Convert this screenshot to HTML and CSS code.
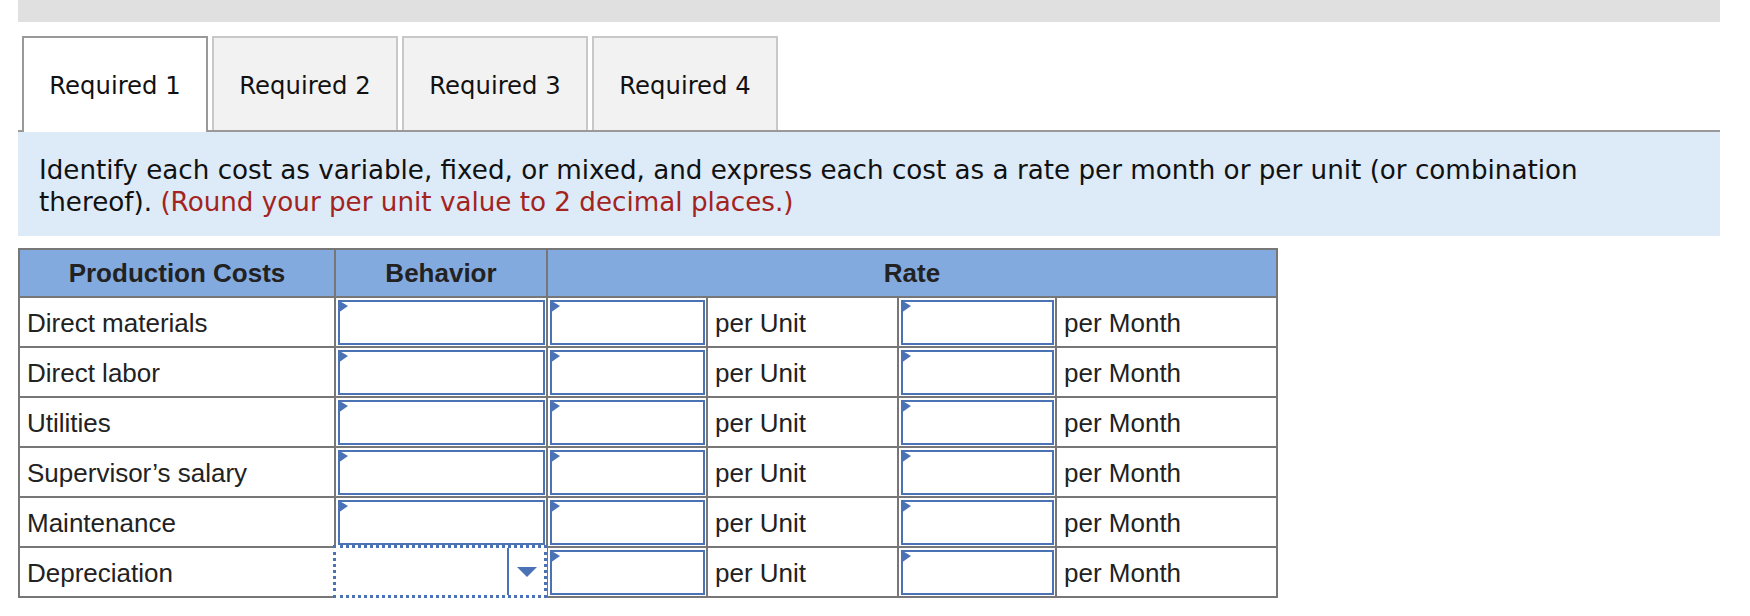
FILE: index.html
```html
<!DOCTYPE html>
<html lang="en">
<head>
<meta charset="utf-8">
<title>Required 1</title>
<link rel="stylesheet" href="styles.css">
</head>
<body>
<div class="page">
  <div class="topbar"></div>
  <div class="tabs">
    <div class="tab active">Required 1</div>
    <div class="tab">Required 2</div>
    <div class="tab">Required 3</div>
    <div class="tab">Required 4</div>
  </div>
  <div class="instructions">Identify each cost as variable, fixed, or mixed, and express each cost as a rate per month or per unit (or combination thereof). <span class="note">(Round your per unit value to 2 decimal places.)</span></div>
  <table class="costs">
    <colgroup>
      <col class="c-label"><col class="c-behavior"><col class="c-in1"><col class="c-unit"><col class="c-in2"><col class="c-month">
    </colgroup>
    <thead>
      <tr><th>Production Costs</th><th>Behavior</th><th colspan="4">Rate</th></tr>
    </thead>
    <tbody>
      <tr>
        <td class="label">Direct materials</td>
        <td class="input-cell"><div class="field"></div></td>
        <td class="input-cell"><div class="field"></div></td>
        <td class="unit">per Unit</td>
        <td class="input-cell"><div class="field"></div></td>
        <td class="unit">per Month</td>
      </tr>
      <tr>
        <td class="label">Direct labor</td>
        <td class="input-cell"><div class="field"></div></td>
        <td class="input-cell"><div class="field"></div></td>
        <td class="unit">per Unit</td>
        <td class="input-cell"><div class="field"></div></td>
        <td class="unit">per Month</td>
      </tr>
      <tr>
        <td class="label">Utilities</td>
        <td class="input-cell"><div class="field"></div></td>
        <td class="input-cell"><div class="field"></div></td>
        <td class="unit">per Unit</td>
        <td class="input-cell"><div class="field"></div></td>
        <td class="unit">per Month</td>
      </tr>
      <tr>
        <td class="label">Supervisor’s salary</td>
        <td class="input-cell"><div class="field"></div></td>
        <td class="input-cell"><div class="field"></div></td>
        <td class="unit">per Unit</td>
        <td class="input-cell"><div class="field"></div></td>
        <td class="unit">per Month</td>
      </tr>
      <tr>
        <td class="label">Maintenance</td>
        <td class="input-cell"><div class="field"></div></td>
        <td class="input-cell"><div class="field"></div></td>
        <td class="unit">per Unit</td>
        <td class="input-cell"><div class="field"></div></td>
        <td class="unit">per Month</td>
      </tr>
      <tr>
        <td class="label">Depreciation</td>
        <td class="select-cell">
          <div class="select">
            <div class="select-arrow">
              <svg width="20" height="10" viewBox="0 0 20 10"><path d="M0 0H20L10 10Z" fill="#4a72b5"/></svg>
            </div>
          </div>
        </td>
        <td class="input-cell"><div class="field"></div></td>
        <td class="unit">per Unit</td>
        <td class="input-cell"><div class="field"></div></td>
        <td class="unit">per Month</td>
      </tr>
    </tbody>
  </table>
</div>
</body>
</html>
```
FILE: styles.css
```css
body {
  margin: 0;
  background: #fff;
}

.page {
  margin-left: 18px;
  width: 1702px;
}

.topbar {
  height: 22px;
  background: #e0e0e0;
}

.tabs {
  display: flex;
  align-items: flex-start;
  gap: 4px;
  padding-left: 4px;
  margin-top: 14px;
  height: 94px;
  border-bottom: 2px solid #999;
}

.tab {
  box-sizing: border-box;
  width: 186px;
  height: 94px;
  padding-top: 2px;
  border: 2px solid #c8c8c8;
  border-bottom: none;
  background: #f2f2f2;
  display: flex;
  align-items: center;
  justify-content: center;
  font-family: "DejaVu Sans", Verdana, sans-serif;
  font-size: 24.3px;
  color: #111;
}

.tab.active {
  height: 96px;
  padding-bottom: 2px;
  background: #fff;
  border-color: #999;
}

.instructions {
  background: #ddeaf7;
  padding: 22px 100px 18px 21px;
  font-family: "DejaVu Sans", Verdana, sans-serif;
  font-size: 26.2px;
  line-height: 32px;
  color: #111;
}

.note {
  color: #a3231f;
}

.costs {
  margin-top: 12px;
  border-collapse: collapse;
  table-layout: fixed;
  width: 1258px;
  font-family: "Liberation Sans", Arial, sans-serif;
  font-size: 26px;
  color: #222;
}

.c-label { width: 316px; }
.c-behavior { width: 212px; }
.c-in1 { width: 160px; }
.c-unit { width: 191px; }
.c-in2 { width: 158px; }
.c-month { width: 221px; }

.costs th,
.costs td {
  border: 2px solid #777;
  padding: 0;
}

.costs thead tr {
  height: 48px;
}

.costs tbody tr {
  height: 50px;
}

.costs th {
  background: #82aade;
  font-weight: bold;
  text-align: center;
}

.costs td.label {
  padding-left: 7px;
  padding-top: 2px;
}

.costs td.unit {
  padding-left: 7px;
  padding-top: 2px;
}

.costs td.input-cell {
  padding: 2px 1px 1px 2px;
}

.field {
  position: relative;
  box-sizing: border-box;
  height: 45px;
  border: 2px solid #4a72b5;
  background: #fff;
}

.field::before {
  content: "";
  position: absolute;
  left: -2px;
  top: -2px;
  border-left: 10px solid #4a72b5;
  border-top: 6px solid transparent;
  border-bottom: 7px solid transparent;
}

.costs td.select-cell {
  padding: 0;
}

.select {
  position: relative;
  box-sizing: border-box;
  height: 53px;
  margin: -3px -1px -2px -3px;
  border: 3px dotted #4a72b5;
  background: #fff;
  display: flex;
  justify-content: flex-end;
}

.select-arrow {
  width: 35px;
  border-left: 2px solid #4a72b5;
  display: flex;
  align-items: center;
  justify-content: center;
}

.select-arrow svg {
  display: block;
}
```
